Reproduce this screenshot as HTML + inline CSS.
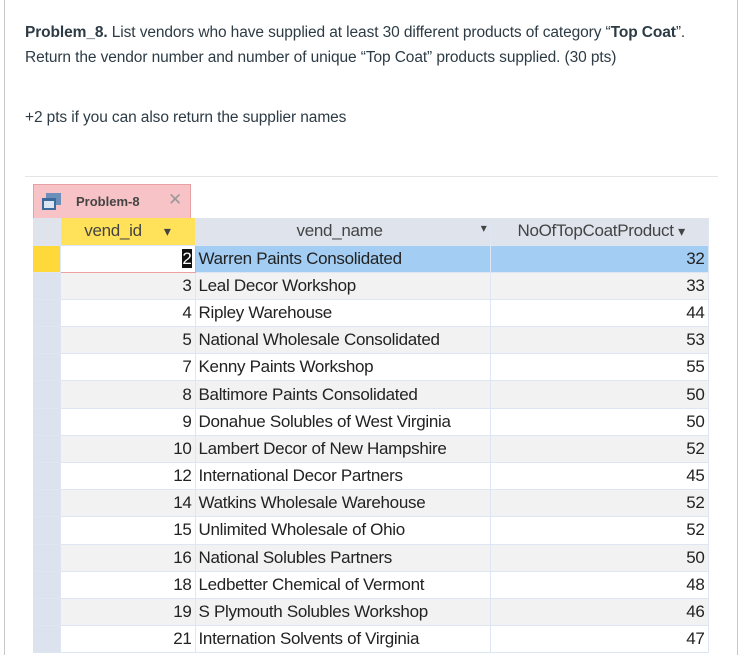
<!DOCTYPE html>
<html style="overflow:hidden;height:657px"><head><style>
body{margin:0;width:756px;height:657px;background:#fff;overflow:hidden;font-family:"Liberation Sans",sans-serif;position:relative}
.frame{position:absolute;left:4px;top:-2px;width:734px;height:657px;border:1px solid #c7c7c7;border-bottom:none;box-sizing:border-box}
.p{position:absolute;left:25px;color:#2d3b45;font-size:15.5px;letter-spacing:-0.1px;white-space:nowrap}
.shot{position:absolute;left:25px;top:176px;width:693px;height:481px;background:#fff;border-top:1px solid #e5e5e5;box-sizing:border-box}
.tab{position:absolute;left:33px;top:184px;width:158px;height:34px;background:#f8c3c6;border:1px solid #e8a0a4;border-bottom:none;box-sizing:border-box}
.tab span{position:absolute;left:42px;top:9px;font-size:13px;font-weight:bold;color:#444}
.tab i{position:absolute;left:134px;top:5px;font-style:normal;color:#999;font-size:17px}
.tbl{position:absolute;left:33px;top:218px;border-collapse:collapse;font-size:17px;color:#222;letter-spacing:-0.3px}
.tbl td{height:27.2px;padding:0 3px;border-right:1px solid #dfe6f3;border-bottom:1px solid #dfe6f3;white-space:nowrap;box-sizing:border-box}
.tbl tr.h td{background:#dee3ec;color:#444;text-align:center;height:27px}
.tbl td.sel{width:27px;background:#dde3ee;padding:0}
.tbl td.id{width:135px;text-align:right}
.tbl td.nm{width:295px}
.tbl td.ct{width:218px;text-align:right}
.tbl tr:nth-child(odd):not(.h) td.id,.tbl tr:nth-child(odd):not(.h) td.nm,.tbl tr:nth-child(odd):not(.h) td.ct{background:#f2f2f2}
</style></head><body>
<div class="frame"></div>
<div class="p" style="top:24px"><b>Problem_8.</b> List vendors who have supplied at least 30 different products of category “<b>Top Coat</b>”.</div>
<div class="p" style="top:49px">Return the vendor number and number of unique “Top Coat” products supplied. (30 pts)</div>
<div class="p" style="top:109px">+2 pts if you can also return the supplier names</div>
<div class="shot"></div>
<div class="tab"><svg style="position:absolute;left:8px;top:8px" width="20" height="18"><rect x="4" y="0" width="15" height="12" fill="#6b8fb8"/><rect x="0" y="5" width="14" height="12" fill="#3d6a9c"/><rect x="2" y="8" width="10" height="7" fill="#dbe6f3"/></svg><span>Problem-8</span><i>✕</i></div>
<table class="tbl">
<tr class="h"><td class="sel" style="background:#dee3ec"></td><td class="id" style="background:#ffe25a;text-align:center">vend_id &nbsp;&nbsp;&nbsp;&nbsp;<small>▾</small></td><td class="nm">vend_name <span style="float:right;font-size:12px">▾</span></td><td class="ct">&nbsp;NoOfTopCoatProduct <small>▾</small></td></tr>
<tr><td class="sel" style="background:#ffd83a"></td><td class="id" style="background:#fff;border:1px solid #f0a0a0"><span style="background:#111;color:#fff">2</span></td><td class="nm" style="background:#a3cdf3">Warren Paints Consolidated</td><td class="ct" style="background:#a3cdf3">32</td></tr>
<tr><td class="sel"></td><td class="id">3</td><td class="nm">Leal Decor Workshop</td><td class="ct">33</td></tr>
<tr><td class="sel"></td><td class="id">4</td><td class="nm">Ripley Warehouse</td><td class="ct">44</td></tr>
<tr><td class="sel"></td><td class="id">5</td><td class="nm">National Wholesale Consolidated</td><td class="ct">53</td></tr>
<tr><td class="sel"></td><td class="id">7</td><td class="nm">Kenny Paints Workshop</td><td class="ct">55</td></tr>
<tr><td class="sel"></td><td class="id">8</td><td class="nm">Baltimore Paints Consolidated</td><td class="ct">50</td></tr>
<tr><td class="sel"></td><td class="id">9</td><td class="nm">Donahue Solubles of West Virginia</td><td class="ct">50</td></tr>
<tr><td class="sel"></td><td class="id">10</td><td class="nm">Lambert Decor of New Hampshire</td><td class="ct">52</td></tr>
<tr><td class="sel"></td><td class="id">12</td><td class="nm">International Decor Partners</td><td class="ct">45</td></tr>
<tr><td class="sel"></td><td class="id">14</td><td class="nm">Watkins Wholesale Warehouse</td><td class="ct">52</td></tr>
<tr><td class="sel"></td><td class="id">15</td><td class="nm">Unlimited Wholesale of Ohio</td><td class="ct">52</td></tr>
<tr><td class="sel"></td><td class="id">16</td><td class="nm">National Solubles Partners</td><td class="ct">50</td></tr>
<tr><td class="sel"></td><td class="id">18</td><td class="nm">Ledbetter Chemical of Vermont</td><td class="ct">48</td></tr>
<tr><td class="sel"></td><td class="id">19</td><td class="nm">S Plymouth Solubles Workshop</td><td class="ct">46</td></tr>
<tr><td class="sel"></td><td class="id">21</td><td class="nm">Internation Solvents of Virginia</td><td class="ct">47</td></tr>
</table>
</body></html>
